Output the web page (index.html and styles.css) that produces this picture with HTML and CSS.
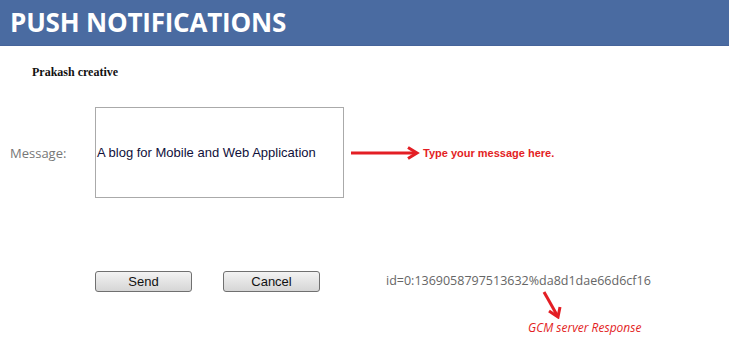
FILE: index.html
```html
<!DOCTYPE html>
<html lang="en">
<head>
    <meta charset="UTF-8">
    <meta name="viewport" content="width=device-width, initial-scale=1.0">
    <title>Push Notifications</title>
    <link rel="stylesheet" href="styles.css">
</head>
<body>
    <header class="topbar">
        <h1>PUSH NOTIFICATIONS</h1>
    </header>

    <p class="brand">Prakash creative</p>

    <div class="msg-row">
        <label class="lbl" for="message">Message:</label>
        <div class="msg-box" id="message">A blog for Mobile and Web Application</div>
        <svg class="arrow-right" width="70" height="14" viewBox="0 0 70 14">
            <path d="M0 7 H65" stroke="#e31e24" stroke-width="3" fill="none"/>
            <path d="M57 1.5 L66 7 L57 12.5" stroke="#e31e24" stroke-width="3" fill="none"/>
        </svg>
        <span class="hint">Type your message here.</span>
    </div>

    <div class="actions">
        <button class="btn">Send</button>
        <button class="btn cancel">Cancel</button>
        <div class="response">
            <span class="resp-id">id=0:1369058797513632%da8d1dae66d6cf16</span>
            <div class="resp-note">
                <svg class="arrow-down" width="24" height="28" viewBox="0 0 24 28">
                    <path d="M3 1 L16 24" stroke="#e31e24" stroke-width="3" fill="none"/>
                    <path d="M8 20 L17 26 L19 16" stroke="#e31e24" stroke-width="3" fill="none"/>
                </svg>
                <span class="resp-label">GCM server Response</span>
            </div>
        </div>
    </div>
</body>
</html>
```

FILE: styles.css
```css
body {
    margin: 0;
    background-color: white;
    font-family: 'Liberation Sans', Arial, sans-serif;
}
.topbar {
    background-color: #4a6ba1;
    height: 45px;
    border-bottom: 1px solid #46649a;
}
.topbar h1 {
    margin: 0;
    padding: 6px 0 0 10px;
    color: white;
    font-family: 'Open Sans', sans-serif;
    font-size: 26px;
    font-weight: bold;
    letter-spacing: -0.2px;
    line-height: 32px;
}
.brand {
    margin: 18px 0 0 32px;
    font-family: 'Liberation Serif', serif;
    font-size: 12px;
    font-weight: bold;
    color: #111;
    line-height: 16px;
}
.msg-row {
    display: flex;
    align-items: center;
    margin-top: 27px;
}
.msg-row > * {
    flex: none;
}
.lbl {
    display: block;
    width: 95px;
    padding-left: 10px;
    box-sizing: border-box;
    font-family: 'Open Sans', sans-serif;
    font-size: 13px;
    color: #777;
}
.msg-box {
    width: 249px;
    height: 91px;
    box-sizing: border-box;
    border: 1px solid #aaa;
    padding: 0 1px;
    display: flex;
    align-items: center;
    font-size: 13px;
    color: #10103a;
}
.arrow-right {
    margin-left: 7px;
}
.hint {
    margin-left: 2px;
    color: #e31e24;
    font-size: 11px;
    font-weight: bold;
}
.actions {
    display: flex;
    align-items: flex-start;
    margin-top: 73px;
    padding-left: 95px;
}
.btn {
    width: 97px;
    height: 21px;
    padding: 0;
    border: 1px solid #707070;
    border-radius: 3px;
    background: linear-gradient(#f3f3f3, #e4e4e4 50%, #d6d6d6);
    font-family: 'Liberation Sans', Arial, sans-serif;
    font-size: 13px;
    color: #111;
}
.cancel {
    margin-left: 31px;
}
.response {
    margin-left: 66px;
    display: flex;
    flex-direction: column;
}
.resp-id {
    font-family: 'Open Sans', sans-serif;
    font-size: 12.5px;
    color: #666;
    line-height: 20px;
}
.resp-note {
    position: relative;
    height: 50px;
}
.arrow-down {
    position: absolute;
    left: 155px;
    top: 0;
}
.resp-label {
    position: absolute;
    left: 142px;
    top: 28px;
    font-family: 'Open Sans', sans-serif;
    font-size: 12px;
    font-style: italic;
    color: #e31e24;
}
```
